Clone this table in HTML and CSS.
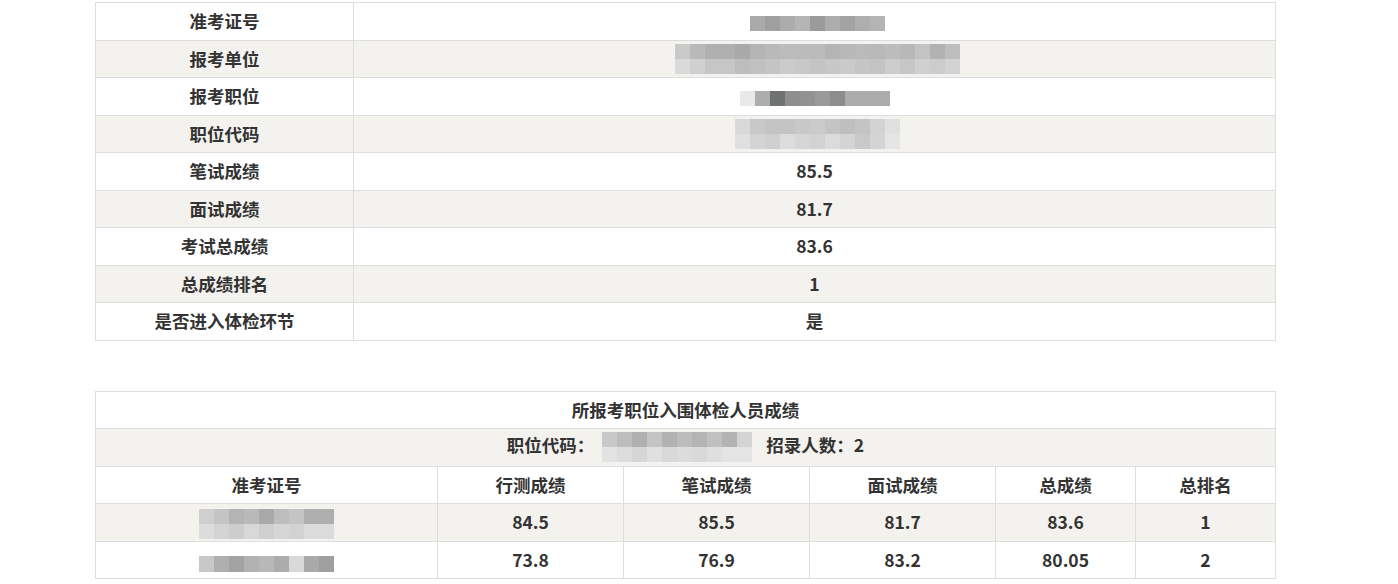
FILE: index.html
```html
<!DOCTYPE html>
<html lang="zh-CN">
<head>
    <meta charset="UTF-8">
    <meta name="viewport" content="width=device-width, initial-scale=1.0">
    <title>成绩查询</title>
    <link rel="stylesheet" href="styles.css">
</head>
<body>
    <div class="wrap">
        <table class="score info">
            <tr>
                <td class="label">准考证号</td>
                <td><span class="mosaic m-id"></span></td>
            </tr>
            <tr>
                <td class="label">报考单位</td>
                <td><span class="mosaic m-unit"></span></td>
            </tr>
            <tr>
                <td class="label">报考职位</td>
                <td><span class="mosaic m-post"></span></td>
            </tr>
            <tr>
                <td class="label">职位代码</td>
                <td><span class="mosaic m-code"></span></td>
            </tr>
            <tr>
                <td class="label">笔试成绩</td>
                <td>85.5</td>
            </tr>
            <tr>
                <td class="label">面试成绩</td>
                <td>81.7</td>
            </tr>
            <tr>
                <td class="label">考试总成绩</td>
                <td>83.6</td>
            </tr>
            <tr>
                <td class="label">总成绩排名</td>
                <td>1</td>
            </tr>
            <tr>
                <td class="label">是否进入体检环节</td>
                <td>是</td>
            </tr>
        </table>

        <table class="score list">
            <colgroup>
                <col class="c-id">
                <col class="c-num">
                <col class="c-num">
                <col class="c-num">
                <col class="c-sum">
                <col>
            </colgroup>
            <tr>
                <td colspan="6">所报考职位入围体检人员成绩</td>
            </tr>
            <tr class="shade">
                <td colspan="6">职位代码：<span class="mosaic m-code2"></span>招录人数：2</td>
            </tr>
            <tr>
                <td>准考证号</td>
                <td>行测成绩</td>
                <td>笔试成绩</td>
                <td>面试成绩</td>
                <td>总成绩</td>
                <td>总排名</td>
            </tr>
            <tr class="shade">
                <td><span class="mosaic m-row1"></span></td>
                <td>84.5</td>
                <td>85.5</td>
                <td>81.7</td>
                <td>83.6</td>
                <td>1</td>
            </tr>
            <tr>
                <td><span class="mosaic m-row2"></span></td>
                <td>73.8</td>
                <td>76.9</td>
                <td>83.2</td>
                <td>80.05</td>
                <td>2</td>
            </tr>
        </table>
    </div>
</body>
</html>
```

FILE: styles.css
```css
body {
    margin: 0;
    background: #fff;
    font-family: "Microsoft YaHei", "Noto Sans CJK SC", sans-serif;
    color: #333;
}
.wrap {
    width: 1181px;
    padding: 2px 0 0 95px;
}
.score {
    width: 1181px;
    border-collapse: collapse;
    table-layout: fixed;
    font-size: 17.5px;
    font-weight: bold;
}
.score td {
    height: 37.5px;
    padding: 0 8px;
    border: 1px solid #dedede;
    text-align: center;
    vertical-align: middle;
    line-height: 20px;
    box-sizing: border-box;
}
.info tr:nth-child(even) {
    background: #f4f2ee;
}
.info .label {
    width: 258px;
}
.list {
    margin-top: 50px;
}
.list .shade {
    background: #f4f2ee;
}
.list .c-id {
    width: 342px;
}
.list .c-num {
    width: 186px;
}
.list .c-sum {
    width: 140px;
}

/* pixelated blur over private values */
.mosaic {
    display: inline-block;
    vertical-align: middle;
    background-repeat: no-repeat;
}
.m-id {
    width: 135px;
    height: 15px;
    margin-left: 6px;
    background-image: linear-gradient(90deg, #aaa 0 15px, #9f9f9f 15px 30px, #acacac 30px 45px, #b5b5b5 45px 60px, #9b9b9b 60px 75px, #adadad 75px 90px, #a3a3a3 90px 105px, #aeaeae 105px 120px, #b4b4b4 120px 135px);
}
.m-unit {
    width: 285px;
    height: 30px;
    margin-left: 6px;
    background-size: 285px 15px;
    background-position: 0 0, 0 15px;
    background-image:
        linear-gradient(90deg, #c9c9c9 0 15px, #b9b9b9 15px 30px, #b0b0b0 30px 60px, #a9a9a9 60px 75px, #b4b4b4 75px 90px, #b9b9b9 90px 105px, #bcbcbc 105px 120px, #bbb 120px 150px, #b4b4b4 150px 165px, #b8b8b8 165px 180px, #bababa 180px 195px, #b9b9b9 195px 210px, #bcbcbc 210px 225px, #b8b8b8 225px 240px, #c3c3c3 240px 255px, #b2b2b2 255px 270px, #bdbdbd 270px 285px),
        linear-gradient(90deg, #dadada 0 15px, #d0d0d0 15px 30px, #c6c6c6 30px 60px, #bdbdbd 60px 75px, #c0c0c0 75px 90px, #c4c4c4 90px 105px, #cbcbcb 105px 120px, #c8c8c8 120px 135px, #c4c4c4 135px 150px, #c7c7c7 150px 165px, #cacaca 165px 180px, #c5c5c5 180px 195px, #c3c3c3 195px 210px, #ccc 210px 225px, #c6c6c6 225px 240px, #d0d0d0 240px 255px, #ccc 255px 270px, #d3d3d3 270px 285px);
}
.m-post {
    width: 150px;
    height: 15px;
    background-image: linear-gradient(90deg, #e9e9e9 0 15px, #adadad 15px 30px, #707171 30px 45px, #8e8e8e 45px 60px, #929292 60px 75px, #9a9a9a 75px 90px, #8d8d8d 90px 105px, #ababab 105px 150px);
}
.m-code {
    width: 165px;
    height: 30px;
    margin-left: 6px;
    background-size: 165px 15px;
    background-position: 0 0, 0 15px;
    background-image:
        linear-gradient(90deg, #d9d9d9 0 15px, #c8c8c8 15px 30px, #c4c4c4 30px 60px, #c8c8c8 60px 75px, #cbcbcb 75px 90px, #c4c4c4 90px 105px, #bfbfbf 105px 120px, #c4c4c4 120px 135px, #d3d3d3 135px 150px, #e0e0e0 150px 165px),
        linear-gradient(90deg, #e0e0e0 0 15px, #d4d4d4 15px 30px, #cfcfcf 30px 45px, #ddd 45px 60px, #d6d6d6 60px 75px, #d2d2d2 75px 90px, #dbdbdb 90px 105px, #d4d4d4 105px 120px, #c9c9c9 120px 135px, #d4d4d4 135px 150px, #e5e5e5 150px 165px);
}
.m-code2 {
    width: 150px;
    height: 30px;
    margin: 0 14px 0 8px;
    background-size: 150px 15px;
    background-position: 0 0, 0 15px;
    background-image:
        linear-gradient(90deg, #c8c8c8 0 15px, #bdbdbd 15px 30px, #b0b0b0 30px 45px, #c4c4c4 45px 60px, #b2b2b2 60px 75px, #bcbcbc 75px 90px, #b4b4b4 90px 105px, #c0c0c0 105px 120px, #b3b3b3 120px 135px, #d4d4d4 135px 150px),
        linear-gradient(90deg, #e3e3e3 0 15px, #ddd 15px 30px, #d6d6d6 30px 45px, #e0e0e0 45px 60px, #d8d8d8 60px 75px, #dcdcdc 75px 90px, #d9d9d9 90px 105px, #dfdfdf 105px 120px, #e4e4e4 120px 150px);
}
.m-row1 {
    width: 135px;
    height: 30px;
    margin-top: 4px;
    background-size: 135px 15px;
    background-position: 0 0, 0 15px;
    background-image:
        linear-gradient(90deg, #cfcfcf 0 15px, #c4c4c4 15px 30px, #b4b4b4 30px 45px, #b9b9b9 45px 60px, #a9a9a9 60px 75px, #bdbdbd 75px 90px, #c4c4c4 90px 105px, #afafaf 105px 135px),
        linear-gradient(90deg, #dcdcdc 0 15px, #d4d4d4 15px 30px, #cdcdcd 30px 45px, #d8d8d8 45px 60px, #cfcfcf 60px 75px, #d6d6d6 75px 90px, #d2d2d2 90px 105px, #dbdbdb 105px 135px);
}
.m-row2 {
    width: 135px;
    height: 16px;
    margin-top: 8px;
    background-image: linear-gradient(90deg, #c8c8c8 0 15px, #afafaf 15px 30px, #a3a3a3 30px 45px, #b2b2b2 45px 60px, #b8b8b8 60px 75px, #acacac 75px 90px, #d9d9d9 90px 105px, #a9a9a9 105px 120px, #9f9f9f 120px 135px);
}
```
